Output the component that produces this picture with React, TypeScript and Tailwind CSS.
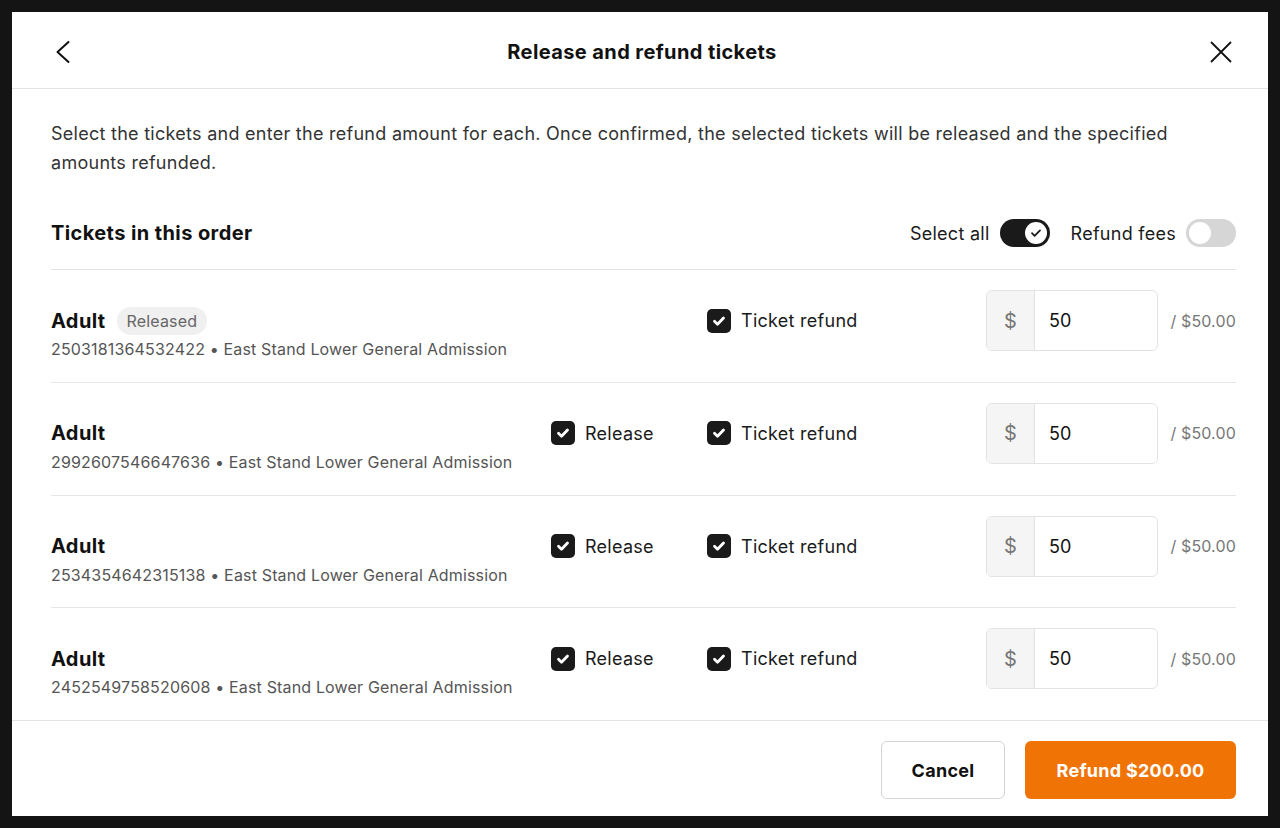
import React from "react"

const font = { fontFamily: "Inter, 'Noto Sans', sans-serif" }

type Ticket = {
  id: string
  released?: boolean
}

const tickets: Ticket[] = [
  { id: "2503181364532422", released: true },
  { id: "2992607546647636" },
  { id: "2534354642315138" },
  { id: "2452549758520608" },
]

function CheckBox({ label }: { label: string }) {
  return (
    <div className="flex items-center gap-[10px]">
      <span className="flex h-6 w-6 items-center justify-center rounded-[5px] bg-[#1a1a1a]">
        <svg width="16" height="16" viewBox="0 0 16 16" fill="none">
          <path
            d="M3.5 8.3l3 3 6-6.3"
            stroke="white"
            strokeWidth="2.8"
            strokeLinecap="round"
            strokeLinejoin="round"
          />
        </svg>
      </span>
      <span className="text-[18px] tracking-[0.015em] text-[#1a1a1a]">{label}</span>
    </div>
  )
}

function Toggle({ on }: { on: boolean }) {
  return (
    <span
      className={
        on
          ? "flex h-7 w-[50px] items-center justify-end rounded-full bg-[#1a1a1a] p-[3px]"
          : "flex h-7 w-[50px] items-center justify-start rounded-full bg-[#d6d6d6] p-[3px]"
      }
    >
      <span className="flex h-[22px] w-[22px] items-center justify-center rounded-full bg-white">
        {on && (
          <svg width="14" height="14" viewBox="0 0 14 14" fill="none">
            <path
              d="M3 7.2l2.6 2.6L11 4.4"
              stroke="#1a1a1a"
              strokeWidth="1.8"
              strokeLinecap="round"
              strokeLinejoin="round"
            />
          </svg>
        )}
      </span>
    </span>
  )
}

function TicketRow({ ticket }: { ticket: Ticket }) {
  return (
    <div className="flex items-start border-b border-[#e6e6e6] pt-5 pb-[20.75px]">
      {/* NAME + SEAT */}
      <div className="flex-1">
        <div className="flex h-[61px] items-center gap-[11px]">
          <span className="text-[20px] font-bold tracking-[0.02em] text-[#111]">Adult</span>
          {ticket.released && (
            <span className="flex h-7 items-center rounded-full bg-[#f0f0f0] px-[10px] text-[16px] tracking-[0.01em] text-[#666]">
              Released
            </span>
          )}
        </div>
        <div className="-mt-[14px] text-[16px] leading-6 tracking-[0.01em] text-[#555]">
          {ticket.id} • East Stand Lower General Admission
        </div>
      </div>

      {/* RELEASE */}
      <div className="flex h-[61px] w-[156px] items-center">
        {!ticket.released && <CheckBox label="Release" />}
      </div>

      {/* REFUND */}
      <div className="flex h-[61px] w-[279px] items-center">
        <CheckBox label="Ticket refund" />
      </div>

      {/* AMOUNT */}
      <div className="flex h-[61px] w-[172px] overflow-hidden rounded-[6px] border border-[#e3e3e3]">
        <div className="flex w-12 items-center justify-center border-r border-[#e3e3e3] bg-[#f5f5f5] text-[20px] text-[#777]">
          $
        </div>
        <div className="flex flex-1 items-center pl-[14px] text-[18px] text-[#111]">50</div>
      </div>
      <div className="flex h-[61px] w-[78px] items-center justify-end text-[16px] tracking-[0.01em] text-[#777]">
        / $50.00
      </div>
    </div>
  )
}

export default function App() {
  return (
    <div className="h-[828px] w-[1280px] bg-[#141414] p-3" style={font}>
      <div className="flex h-[804px] w-[1256px] flex-col bg-white">
        {/* HEADER */}
        <div className="flex h-[77px] shrink-0 items-center justify-between border-b border-[#e3e3e3] pt-[4px] pl-[39px] pr-[32px]">
          <svg width="24" height="24" viewBox="0 0 24 24" fill="none">
            <path
              d="M17.5 2l-11 10 11 10"
              stroke="#111"
              strokeWidth="2"
              strokeLinecap="round"
              strokeLinejoin="round"
            />
          </svg>
          <h1 className="text-[20px] font-bold tracking-[0.02em] text-[#111]">
            Release and refund tickets
          </h1>
          <svg className="mr-[3px]" width="24" height="24" viewBox="0 0 24 24" fill="none">
            <path
              d="M2.5 2.5l19 19M21.5 2.5l-19 19"
              stroke="#111"
              strokeWidth="1.8"
              strokeLinecap="round"
            />
          </svg>
        </div>

        {/* BODY */}
        <div className="flex-1 overflow-hidden pt-[30px] pl-[39px] pr-[32px]">
          <p className="text-[18px] leading-[29px] tracking-[0.015em] text-[#333]">
            Select the tickets and enter the refund amount for each. Once confirmed, the selected
            tickets will be released and the specified amounts refunded.
          </p>

          <div className="mt-[32px] box-content flex h-12 items-center justify-between border-b border-[#e3e3e3] pb-[12px]">
            <h2 className="text-[20px] font-bold tracking-[0.02em] text-[#111]">
              Tickets in this order
            </h2>
            <div className="flex items-center gap-[21px]">
              <div className="flex items-center gap-[10px]">
                <span className="text-[18px] tracking-[0.015em] text-[#1a1a1a]">Select all</span>
                <Toggle on />
              </div>
              <div className="flex items-center gap-[10px]">
                <span className="text-[18px] tracking-[0.015em] text-[#1a1a1a]">Refund fees</span>
                <Toggle on={false} />
              </div>
            </div>
          </div>

          {tickets.map((t) => (
            <TicketRow key={t.id} ticket={t} />
          ))}
        </div>

        {/* FOOTER */}
        <div className="flex h-[96px] shrink-0 items-center justify-end gap-5 border-t border-[#e3e3e3] pt-[3px] pr-[32px]">
          <button className="h-[58px] w-[124px] rounded-[6px] border border-[#d4d4d4] bg-white text-[18px] font-bold tracking-[0.015em] text-[#111]">
            Cancel
          </button>
          <button className="h-[58px] w-[211px] rounded-[6px] bg-[#f07306] text-[18px] font-bold tracking-[0.015em] text-white">
            Refund $200.00
          </button>
        </div>
      </div>
    </div>
  )
}
